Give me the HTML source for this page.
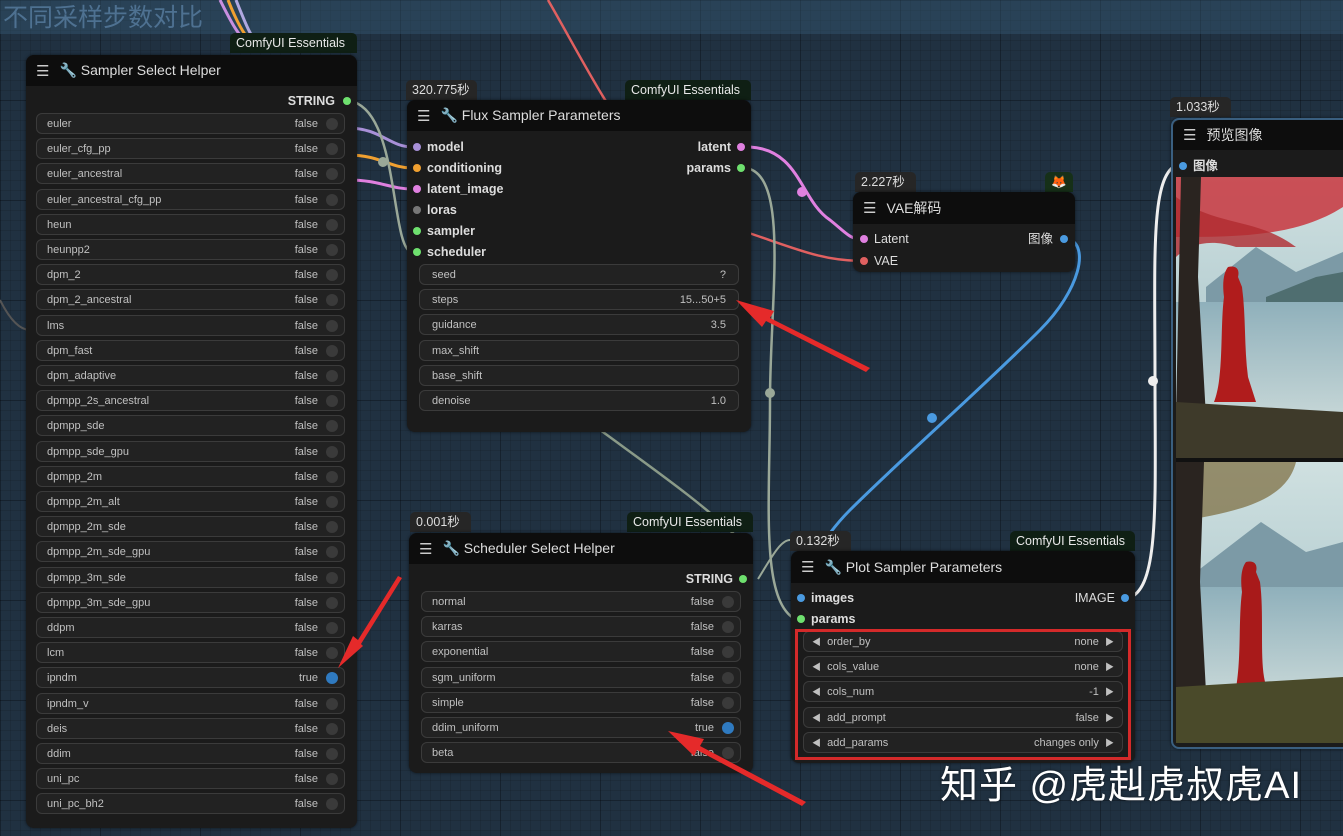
<!DOCTYPE html>
<html><head><meta charset="utf-8">
<style>
*{box-sizing:border-box;margin:0;padding:0}
body{width:1343px;height:836px;overflow:hidden;position:relative;font-family:"Liberation Sans","Noto Sans CJK SC",sans-serif;
background-color:#203141;
background-image:linear-gradient(rgba(0,0,0,.1) 1px,transparent 1px),linear-gradient(90deg,rgba(0,0,0,.1) 1px,transparent 1px),linear-gradient(rgba(0,0,0,.22) 1px,transparent 1px),linear-gradient(90deg,rgba(0,0,0,.22) 1px,transparent 1px);
background-size:10px 10px,10px 10px,100px 100px,100px 100px;}
.grp{position:absolute;left:0;top:0;width:1343px;height:34px;background:rgba(60,100,130,.35)}
.gt{position:absolute;left:3px;top:-2px;font-size:25px;color:#4e7191;font-family:"Liberation Sans","Noto Sans CJK SC",sans-serif}
.ab{position:absolute}
.node{position:absolute;background:#1b1b1b;border-radius:8px;box-shadow:0 0 3px rgba(0,0,0,.6)}
.title{position:absolute;left:0;top:0;right:0;background:#0d0d0d;border-radius:8px 8px 0 0;color:#ddd;font-size:14px;padding-left:10px;display:flex;align-items:center}
.title .hm{font-size:15px;color:#ccc;margin-right:10px}
.badge{position:absolute;height:20px;border-radius:5px 5px 0 0;font-size:12.5px;color:#ddd;padding:0 6px;line-height:20px;background:#262626}
.badge.g{background:#0f1f14;color:#e8e8e8}
.row{position:absolute;height:21px;background:#222;border:1px solid #3b3b3b;border-radius:6px;font-size:11px;color:#c0c0c0;line-height:21px;padding:0 10px}
.row .v{position:absolute;right:26px;top:0}
.row .t{position:absolute;right:6px;top:4px;width:12px;height:12px;border-radius:50%;background:#3a3a3a}
.row .t.on{background:#2f7ac0}
.io{position:absolute;font-size:12.5px;color:#ddd;font-weight:bold;line-height:14px}
.dot{position:absolute;width:8px;height:8px;border-radius:50%}
.w{position:absolute;height:21px;background:#222;border:1px solid #3b3b3b;border-radius:6px;font-size:11px;color:#c0c0c0;line-height:21px}
</style></head><body>
<div class="grp"></div>
<div class="gt">不同采样步数对比</div>

<svg class="ab" style="left:0;top:0" width="1343" height="836">
 <g fill="none" stroke-width="3">
  <path d="M220 0 C230 20 238 35 245 40" stroke="#c98fe0"/>
  <path d="M228 0 C236 20 244 35 250 40" stroke="#f0a030"/>
  <path d="M236 0 C244 20 250 35 255 40" stroke="#b0a8e0"/>
  <path d="M348 128 C380 128 390 147 412 147" stroke="#a890d8"/>
  <path d="M348 155 C380 155 390 168 412 168" stroke="#f0a030"/>
  <path d="M348 180 C380 180 390 189 412 189" stroke="#e080e0"/>
  <path d="M350 101 C400 110 390 250 412 252" stroke="#9aa898" stroke-width="2.5"/>
  <path d="M750 147 C800 150 800 200 830 220 C845 232 850 239 860 239" stroke="#e080e0"/>
  <path d="M548 0 C600 90 650 200 740 230 C800 250 820 260 860 261" stroke="#e06060" stroke-width="2.5"/>
  <path d="M746 168 C790 175 770 300 770 400 C770 500 760 600 795 619" stroke="#9aa898" stroke-width="2.5"/>
  <path d="M580 415 C640 460 700 500 740 540" stroke="#8a9a88" stroke-width="2.5"/>
  <path d="M758 579 C770 560 780 540 790 540" stroke="#9aa898" stroke-width="2"/>
  <path d="M1068 239 C1090 245 1080 290 1040 330 C980 390 900 460 850 510 C820 540 800 580 800 598" stroke="#4a9ae0"/>
  <path d="M1128 598 C1160 590 1155 500 1155 380 C1155 250 1150 170 1180 164" stroke="#eee"/>
  <path d="M0 300 C10 320 20 330 30 330" stroke="#555" stroke-width="2"/>
 </g>
 <circle cx="383" cy="162" r="5" fill="#9aa898"/>
 <circle cx="802" cy="192" r="5" fill="#e080e0"/>
 <circle cx="770" cy="393" r="5" fill="#9aa898"/>
 <circle cx="932" cy="418" r="5" fill="#4a9ae0"/>
 <circle cx="1153" cy="381" r="5" fill="#eee"/>
</svg>

<div class="badge g" style="left:230px;top:33px;width:127px">ComfyUI Essentials</div>
<div class="node" style="left:26px;top:55px;width:331px;height:773px">
 <div class="title" style="height:31px"><span class="hm">☰</span>🔧&nbsp;Sampler Select Helper</div>
 <div class="io" style="right:22px;top:39px">STRING</div>
 <div class="dot" style="right:6px;top:42px;background:#6ee06e"></div>
 <div id="srows"></div>
</div>

<div class="badge" style="left:406px;top:80px;width:71px">320.775秒</div>
<div class="badge g" style="left:625px;top:80px;width:126px">ComfyUI Essentials</div>
<div class="node" style="left:407px;top:100px;width:344px;height:332px">
 <div class="title" style="height:31px"><span class="hm">☰</span>🔧&nbsp;Flux Sampler Parameters</div>
 <div id="fio"></div>
</div>

<div class="badge" style="left:855px;top:172px;width:61px">2.227秒</div>
<div class="badge" style="left:1045px;top:172px;width:28px;background:#163018;text-align:center;padding:0">🦊</div>
<div class="node" style="left:853px;top:192px;width:222px;height:80px">
 <div class="title" style="height:32px"><span class="hm">☰</span>VAE解码</div>
 <div class="dot" style="left:7px;top:43px;background:#e080e0"></div><div class="io" style="left:21px;top:40px;font-weight:normal">Latent</div>
 <div class="dot" style="left:7px;top:65px;background:#e06060"></div><div class="io" style="left:21px;top:62px;font-weight:normal">VAE</div>
 <div class="io" style="right:22px;top:40px;font-weight:normal">图像</div><div class="dot" style="right:7px;top:43px;background:#4a9ae0"></div>
</div>

<div class="badge" style="left:410px;top:512px;width:61px">0.001秒</div>
<div class="badge g" style="left:627px;top:512px;width:126px">ComfyUI Essentials</div>
<div class="node" style="left:409px;top:533px;width:344px;height:240px">
 <div class="title" style="height:31px"><span class="hm">☰</span>🔧&nbsp;Scheduler Select Helper</div>
 <div class="io" style="right:20px;top:39px">STRING</div>
 <div class="dot" style="right:6px;top:42px;background:#6ee06e"></div>
 <div id="crows"></div>
</div>

<div class="badge" style="left:790px;top:531px;width:61px">0.132秒</div>
<div class="badge g" style="left:1010px;top:531px;width:125px">ComfyUI Essentials</div>
<div class="node" style="left:791px;top:551px;width:344px;height:212px">
 <div class="title" style="height:32px"><span class="hm">☰</span>🔧&nbsp;Plot Sampler Parameters</div>
 <div class="dot" style="left:6px;top:43px;background:#4a9ae0"></div><div class="io" style="left:20px;top:40px">images</div>
 <div class="dot" style="left:6px;top:64px;background:#6ee06e"></div><div class="io" style="left:20px;top:61px">params</div>
 <div class="io" style="right:20px;top:40px;font-weight:normal">IMAGE</div><div class="dot" style="right:6px;top:43px;background:#4a9ae0"></div>
 <div id="prows"></div>
</div>
<div class="ab" style="left:795px;top:629px;width:336px;height:131px;border:3px solid #d42a2a"></div>

<div class="badge" style="left:1170px;top:97px;width:61px">1.033秒</div>
<div class="node" style="left:1171px;top:118px;width:180px;height:631px;border:2px solid #3a5f80;background:#1b1b1b">
 <div class="title" style="height:30px"><span class="hm">☰</span>预览图像</div>
 <div class="dot" style="left:6px;top:42px;background:#4a9ae0"></div><div class="io" style="left:20px;top:39px">图像</div>
</div>
<svg class="ab" style="left:1176px;top:177px" width="167" height="566">
 <defs>
  <linearGradient id="sky" x1="0" y1="0" x2="0" y2="1"><stop offset="0" stop-color="#cfe0e0"/><stop offset="1" stop-color="#9ebdc4"/></linearGradient>
  <linearGradient id="lake" x1="0" y1="0" x2="0" y2="1"><stop offset="0" stop-color="#8fb0bb"/><stop offset="1" stop-color="#c8d8d8"/></linearGradient>
 </defs>
 <rect width="167" height="281" fill="url(#sky)"/>
 <path d="M30 110 L80 70 L120 95 L167 75 L167 130 L30 130Z" fill="#7c9aa6"/>
 <path d="M90 120 L140 100 L167 95 L167 130 L90 130Z" fill="#4f6e70"/>
 <rect y="125" width="167" height="120" fill="url(#lake)"/>
 <path d="M0 0 L167 0 L167 30 C120 60 60 60 0 60Z" fill="#c8363e" opacity=".85"/>
 <path d="M0 20 C40 50 80 40 120 70 L60 70 C30 60 10 70 0 80Z" fill="#b02a30" opacity=".8"/>
 <path d="M5 0 L25 0 L22 100 L30 240 L0 240Z" fill="#2a2420"/>
 <path d="M52 90 C60 88 64 92 62 100 L66 110 C70 140 68 170 72 200 L80 225 L38 225 C48 200 44 150 48 120 C46 105 48 95 52 90Z" fill="#b01c1c"/>
 <path d="M0 225 L167 235 L167 281 L0 281Z" fill="#3e3a2a"/>
 <rect y="281" width="167" height="4" fill="#111"/>
 <g transform="translate(0,285)">
  <rect width="167" height="281" fill="url(#sky)"/>
  <path d="M20 110 L85 60 L130 90 L167 80 L167 130 L20 130Z" fill="#7c9aa6"/>
  <rect y="125" width="167" height="110" fill="url(#lake)"/>
  <path d="M0 0 L120 0 C110 40 60 50 0 60Z" fill="#7a6a3a" opacity=".7"/>
  <path d="M10 0 L28 0 L24 120 L30 230 L0 230 L0 0Z" fill="#2a2420"/>
  <path d="M70 100 C78 98 82 102 80 110 L84 120 C88 150 84 190 88 215 L92 235 L58 235 C66 205 62 160 66 130 C64 115 66 105 70 100Z" fill="#a81a1a"/>
  <path d="M0 225 L167 215 L167 281 L0 281Z" fill="#4a4a2a"/>
 </g>
</svg>

<svg class="ab" style="left:0;top:0" width="1343" height="836">
 <g fill="#e52a2a">
  <path d="M870 368 L770 318 L774 311 L736 300 L762 327 L766 321 L866 372Z"/>
  <path d="M398 576 L358 640 L353 636 L338 668 L363 646 L361 644 L402 578Z"/>
  <path d="M806 802 L700 746 L704 739 L668 731 L694 756 L697 750 L802 806Z"/>
 </g>
</svg>

<div class="ab" style="left:940px;top:754px;font-size:38px;color:#fff;letter-spacing:1px;text-shadow:0 0 3px rgba(0,0,0,.5)">知乎 @虎赳虎叔虎AI</div>

<script>
function rows(id,names,trueIdx,x,y0,w,pitch){
 var h='';names.forEach(function(n,i){
  h+='<div class="row" style="left:'+x+'px;top:'+(y0+i*pitch)+'px;width:'+w+'px">'+n+'<span class="v">'+(i==trueIdx?'true':'false')+'</span><span class="t'+(i==trueIdx?' on':'')+'"></span></div>';});
 document.getElementById(id).innerHTML=h;}
rows('srows',["euler","euler_cfg_pp","euler_ancestral","euler_ancestral_cfg_pp","heun","heunpp2","dpm_2","dpm_2_ancestral","lms","dpm_fast","dpm_adaptive","dpmpp_2s_ancestral","dpmpp_sde","dpmpp_sde_gpu","dpmpp_2m","dpmpp_2m_alt","dpmpp_2m_sde","dpmpp_2m_sde_gpu","dpmpp_3m_sde","dpmpp_3m_sde_gpu","ddpm","lcm","ipndm","ipndm_v","deis","ddim","uni_pc","uni_pc_bh2"],22,10,58,309,25.2);
rows('crows',["normal","karras","exponential","sgm_uniform","simple","ddim_uniform","beta"],5,12,58,320,25.2);
var f='',ins=[["model","#a890d8"],["conditioning","#f0a030"],["latent_image","#e080e0"],["loras","#777"],["sampler","#6ee06e"],["scheduler","#6ee06e"]];
ins.forEach(function(a,i){f+='<div class="dot" style="left:6px;top:'+(43+i*21)+'px;background:'+a[1]+'"></div><div class="io" style="left:20px;top:'+(40+i*21)+'px">'+a[0]+'</div>';});
f+='<div class="io" style="right:20px;top:40px">latent</div><div class="dot" style="right:6px;top:43px;background:#e080e0"></div>';
f+='<div class="io" style="right:20px;top:61px">params</div><div class="dot" style="right:6px;top:64px;background:#6ee06e"></div>';
[["seed","?"],["steps","15...50+5"],["guidance","3.5"],["max_shift",""],["base_shift",""],["denoise","1.0"]].forEach(function(a,i){
 f+='<div class="w" style="left:12px;top:'+(164+i*25.2)+'px;width:320px;padding:0 12px">'+a[0]+'<span style="position:absolute;right:12px">'+a[1]+'</span></div>';});
document.getElementById('fio').innerHTML=f;
var p='';[["order_by","none"],["cols_value","none"],["cols_num","-1"],["add_prompt","false"],["add_params","changes only"]].forEach(function(a,i){
 p+='<div class="w" style="left:12px;top:'+(80+i*25.2)+'px;width:320px;padding:0 0 0 8px"><span style="font-size:9px">◀</span>&nbsp;&nbsp;'+a[0]+'<span style="position:absolute;right:8px">'+a[1]+'&nbsp;&nbsp;<span style="font-size:9px">▶</span></span></div>';});
document.getElementById('prows').innerHTML=p;
</script>
</body></html>
